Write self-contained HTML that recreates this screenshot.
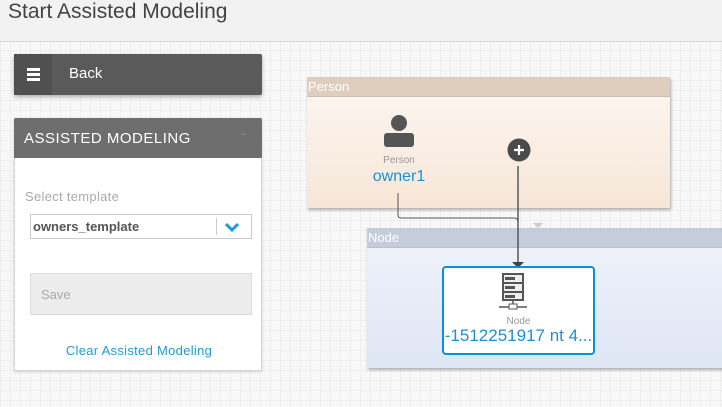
<!DOCTYPE html>
<html><head><style>
body{margin:0;width:722px;height:407px;overflow:hidden;font-family:"Liberation Sans",sans-serif;position:relative;
background-color:#f8f8f8;background-image:linear-gradient(#efefef 1px,transparent 1px),linear-gradient(90deg,#efefef 1px,transparent 1px);background-size:10px 10px;}
div{position:absolute;box-sizing:border-box}
.hdr{left:0;top:0;width:722px;height:42px;background:#f2f2f2;border-bottom:1px solid #d6d6d6}
.hdr span{position:absolute;left:8px;top:0px;font-size:21px;color:#444}
</style></head><body>
<div class="hdr"><span>Start Assisted Modeling</span></div>
<div style="left:14px;top:54px;width:248px;height:41px;background:#5a5a5a;border-radius:2px;box-shadow:0 2px 4px rgba(0,0,0,.3)">
 <div style="left:0;top:0;width:38px;height:41px;background:#505050"></div>
 <div style="left:13px;top:14px;width:13px;height:3px;background:#fff"></div>
 <div style="left:13px;top:19px;width:13px;height:3px;background:#fff"></div>
 <div style="left:13px;top:24px;width:13px;height:3px;background:#fff"></div>
 <div style="left:55px;top:11px;color:#fff;font-size:15px">Back</div>
</div>
<div style="left:14px;top:118px;width:248px;height:253px;background:#fff;border:1px solid #d4d4d4;box-shadow:0 1px 3px rgba(0,0,0,.15)">
 <div style="left:-1px;top:-1px;width:248px;height:40px;background:#6e6e6e;border-radius:2px 2px 0 0">
  <div style="left:10px;top:12px;color:#fff;font-size:15px;letter-spacing:.5px">ASSISTED MODELING</div>
  <div style="left:225px;top:13px;color:#888;font-size:11px">&#8963;</div>
 </div>
 <div style="left:10px;top:70px;color:#aaa;font-size:13px;letter-spacing:.3px">Select template</div>
 <div style="left:15px;top:95px;width:222px;height:25px;border:1px solid #ccc">
  <div style="left:2px;top:4px;font-size:13px;font-weight:bold;color:#555">owners_template</div>
  <div style="left:185px;top:3px;width:1px;height:17px;background:#ccc"></div>
  <svg style="position:absolute;left:193px;top:7px" width="16" height="10"><path d="M2 2 L8 8 L14 2" stroke="#1e9bd7" stroke-width="3" fill="none"/></svg>
 </div>
 <div style="left:15px;top:154px;width:222px;height:42px;background:#ececec;border:1px solid #ddd">
  <div style="left:10px;top:13px;color:#aaa;font-size:13px">Save</div>
 </div>
 <div style="left:0;top:224px;width:248px;text-align:center;color:#1e9bd7;font-size:13px;letter-spacing:.3px">Clear Assisted Modeling</div>
</div>
<div style="left:307px;top:77px;width:363px;height:131px;background:linear-gradient(#fcf7f2,#f7e6d7);box-shadow:1px 2px 3px rgba(0,0,0,.3)">
 <div style="left:0;top:0;width:363px;height:20px;background:#dfcdbe;border-bottom:1px solid #cdbfb2;color:#fff;font-size:13px;padding:2px 0 0 1px">Person</div>
</div>
<div style="left:367px;top:228px;width:360px;height:140px;background:linear-gradient(#f0f3fa,#dee5f4);box-shadow:1px 2px 3px rgba(0,0,0,.3)">
 <div style="left:0;top:0;width:360px;height:20px;background:#c5ccdb;border-bottom:1px solid #b8bfcf;color:#fff;font-size:13px;padding:2px 0 0 1px">Node</div>
</div>
<svg style="position:absolute;left:0;top:0" width="722" height="407">
 <circle cx="399" cy="123" r="8" fill="#555"/>
 <rect x="384" y="133" width="30" height="14" rx="3" fill="#555"/>
 <path d="M398 193 V215 Q398 218 401 218 H514 Q518 218 518 222" stroke="#555" fill="none"/>
 <line x1="518" y1="166" x2="518" y2="262" stroke="#444" stroke-width="1.3"/>
 <path d="M512 262 H524 L518 268 Z" fill="#444"/>
 <circle cx="519" cy="150" r="11.5" fill="#4a4a4a"/>
 <path d="M519 145 V155 M514 150 H524" stroke="#fff" stroke-width="2.2"/>
 <path d="M533 223 H543 L538 228 Z" fill="#ccc"/>
</svg>
<div style="left:442px;top:266px;width:153px;height:89px;background:#fff;border:2px solid #0096d6;border-radius:4px">
 <svg style="position:absolute;left:55px;top:5px" width="30" height="38">
  <rect x="3" y="0" width="22" height="28" fill="#555"/>
  <rect x="5" y="2" width="18" height="7" fill="#eee"/><rect x="5" y="11" width="18" height="7" fill="#eee"/><rect x="5" y="20" width="18" height="6" fill="#eee"/>
  <rect x="6" y="4" width="10" height="3" fill="#555"/><rect x="6" y="13" width="10" height="3" fill="#555"/><rect x="6" y="22" width="10" height="3" fill="#555"/>
  <path d="M14 28 V32 M0 34 H28" stroke="#555" stroke-width="1.5"/><rect x="10" y="31" width="8" height="5" fill="#fff" stroke="#555"/>
 </svg>
 <div style="left:0;top:48px;width:149px;text-align:center;color:#999;font-size:10px">Node</div>
 <div style="left:0;top:58px;width:149px;text-align:center;color:#1e8fcf;font-size:17px">-1512251917 nt 4...</div>
</div>
<div style="left:360px;top:155px;width:78px;text-align:center;color:#999;font-size:10px">Person</div>
<div style="left:360px;top:168px;width:78px;text-align:center;color:#1e8fcf;font-size:16px">owner1</div>
</body></html>
